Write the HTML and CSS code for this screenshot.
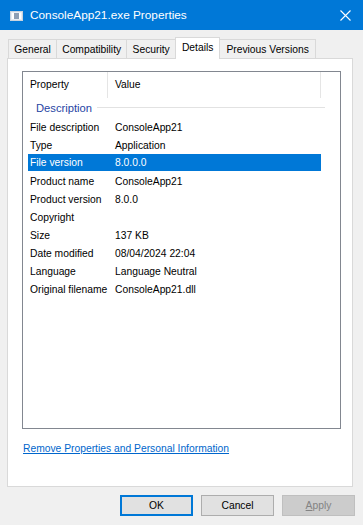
FILE: index.html
```html
<!DOCTYPE html>
<html>
<head>
<meta charset="utf-8">
<link rel="stylesheet" href="styles.css">
</head>
<body>
<div class="window">
  <div class="titlebar">
    <svg class="app-icon" width="13" height="10" viewBox="0 0 13 10">
      <rect x="0.5" y="0.5" width="12" height="9" fill="#e8edf3" stroke="#c9d3de"/>
      <rect x="2" y="2" width="2" height="6" fill="#ffffff"/>
      <rect x="4" y="2" width="5" height="6" fill="#8d9fb5"/>
      <rect x="9" y="2" width="2" height="6" fill="#ffffff"/>
    </svg>
    <span class="title">ConsoleApp21.exe Properties</span>
    <svg class="close" width="11" height="11" viewBox="0 0 11 11">
      <path d="M0.5 0.5 L10.5 10.5 M10.5 0.5 L0.5 10.5" stroke="#ffffff" stroke-width="1.1"/>
    </svg>
  </div>
  <div class="body">
    <div class="tabs">
      <div class="tab">General</div>
      <div class="tab">Compatibility</div>
      <div class="tab">Security</div>
      <div class="tab tab-active">Details</div>
      <div class="tab">Previous Versions</div>
    </div>
    <div class="panel">
      <div class="listbox">
        <div class="header">
          <div class="hcell hcell-prop">Property</div>
          <div class="hcell hcell-val">Value</div>
          <div class="hcell hcell-rest"></div>
        </div>
        <div class="group">
          <span class="group-label">Description</span>
          <span class="group-line"></span>
        </div>
        <div class="row"><span>File description</span><span>ConsoleApp21</span></div>
        <div class="row"><span>Type</span><span>Application</span></div>
        <div class="row row-selected"><span>File version</span><span>8.0.0.0</span></div>
        <div class="row"><span>Product name</span><span>ConsoleApp21</span></div>
        <div class="row"><span>Product version</span><span>8.0.0</span></div>
        <div class="row"><span>Copyright</span><span></span></div>
        <div class="row"><span>Size</span><span>137 KB</span></div>
        <div class="row"><span>Date modified</span><span>08/04/2024 22:04</span></div>
        <div class="row"><span>Language</span><span>Language Neutral</span></div>
        <div class="row"><span>Original filename</span><span>ConsoleApp21.dll</span></div>
      </div>
      <a class="link" href="#">Remove Properties and Personal Information</a>
    </div>
    <div class="buttons">
      <button class="btn btn-default">OK</button>
      <button class="btn">Cancel</button>
      <button class="btn btn-disabled"><u>A</u>pply</button>
    </div>
  </div>
</div>
</body>
</html>
```

FILE: styles.css
```css
html, body {
  margin: 0;
  padding: 0;
}
body {
  width: 363px;
  height: 525px;
  overflow: hidden;
  background: #f0f0f0;
  font-family: "Liberation Sans", Arial, sans-serif;
  font-size: 10.3px;
  color: #000;
}
.window {
  width: 363px;
  height: 525px;
  display: flex;
  flex-direction: column;
}
.titlebar {
  height: 30px;
  background: #0078d7;
  display: flex;
  align-items: center;
  color: #fff;
  flex: none;
}
.app-icon {
  margin-left: 10px;
  margin-top: 1px;
}
.title {
  margin-left: 7px;
  font-size: 11.8px;
  flex: 1;
}
.close {
  margin-right: 12px;
}
.body {
  flex: 1;
  display: flex;
  flex-direction: column;
}
.tabs {
  display: flex;
  align-items: flex-end;
  height: 21px;
  margin-top: 7px;
  padding-left: 8px;
  position: relative;
  z-index: 1;
}
.tab {
  height: 18px;
  line-height: 19px;
  padding: 0 5.2px;
  border: 1px solid #d9d9d9;
  border-bottom: none;
  border-right: none;
  background: #f0f0f0;
  white-space: nowrap;
}
.tab:last-child {
  border-right: 1px solid #d9d9d9;
  padding: 0 6px;
}
.tab-active {
  height: 21px;
  line-height: 19px;
  background: #fff;
  border-right: 1px solid #d9d9d9;
  margin-bottom: -1px;
  padding: 0 6px;
}
.tab-active + .tab {
  border-left: none;
}
.panel {
  margin-left: 7px;
  border: 1px solid #d9d9d9;
  background: #fff;
  padding: 12px 0 0 14px;
  box-sizing: border-box;
  height: 429px;
  width: 346px;
}
.listbox {
  width: 319px;
  height: 358px;
  border: 1px solid #828790;
  box-sizing: border-box;
  background: #fff;
}
.header {
  display: flex;
  height: 26px;
}
.hcell {
  line-height: 26px;
  box-sizing: border-box;
  padding-left: 7px;
}
.hcell-prop {
  width: 85px;
  border-right: 1px solid #e5e5e5;
}
.hcell-val {
  width: 213px;
  border-right: 1px solid #e5e5e5;
}
.group {
  height: 19px;
  display: flex;
  align-items: center;
  padding-left: 13px;
  padding-bottom: 2px;
}
.group-label {
  color: #1f45a3;
  font-size: 11.2px;
}
.group-line {
  flex: none;
  width: 228px;
  height: 1px;
  background: #e2e2e2;
  margin-left: 5px;
}
.row {
  display: grid;
  grid-template-columns: 85px 1fr;
  margin-left: 5px;
  width: 293px;
  height: 18px;
  line-height: 18px;
  white-space: nowrap;
}
.row span {
  padding-left: 2px;
}
.row-selected {
  background: #0078d7;
  color: #fff;
  height: 17px;
  line-height: 17px;
  margin-top: -1px;
  margin-bottom: 2px;
}
.link {
  display: inline-block;
  margin-top: 13px;
  margin-left: 1px;
  color: #0066cc;
  text-decoration: underline;
  line-height: 14px;
}
.buttons {
  display: flex;
  justify-content: flex-end;
  gap: 8px;
  padding-right: 8px;
  margin-top: 8px;
}
.btn {
  width: 73px;
  height: 21px;
  border: 1px solid #adadad;
  background: #e1e1e1;
  font-family: "Liberation Sans", Arial, sans-serif;
  font-size: 10.3px;
  color: #000;
  padding: 0;
  box-sizing: border-box;
}
.btn-default {
  border: 2px solid #0078d7;
}
.btn-disabled {
  background: #cccccc;
  border-color: #bfbfbf;
  color: #838383;
}
.btn-disabled u {
  text-decoration: underline;
}
```
